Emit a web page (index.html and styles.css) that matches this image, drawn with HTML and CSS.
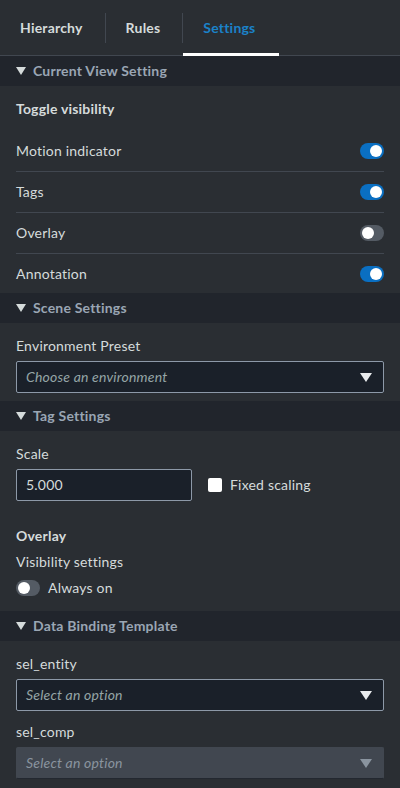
FILE: index.html
```
<!DOCTYPE html>
<html>
<head>
<meta charset="utf-8">
<link rel="stylesheet" href="styles.css">
</head>
<body>
<div class="panel">
  <div class="tabs">
    <div class="tab">Hierarchy</div>
    <div class="sep"></div>
    <div class="tab">Rules</div>
    <div class="sep"></div>
    <div class="tab active">Settings</div>
  </div>

  <div class="section-head"><span class="caret"></span>Current View Setting</div>
  <div class="section-body toggles">
    <div class="bold-label">Toggle visibility</div>
    <div class="rows">
      <div class="row"><span>Motion indicator</span><span class="toggle on"></span></div>
      <div class="row"><span>Tags</span><span class="toggle on"></span></div>
      <div class="row"><span>Overlay</span><span class="toggle"></span></div>
      <div class="row"><span>Annotation</span><span class="toggle on"></span></div>
    </div>
  </div>

  <div class="section-head"><span class="caret"></span>Scene Settings</div>
  <div class="section-body scene-body">
    <div class="field-label">Environment Preset</div>
    <div class="select"><span>Choose an environment</span><span class="arrow"></span></div>
  </div>

  <div class="section-head"><span class="caret"></span>Tag Settings</div>
  <div class="section-body tag-body">
    <div class="field-label">Scale</div>
    <div class="scale-row">
      <div class="input">5.000</div>
      <label class="check"><span class="box"></span>Fixed scaling</label>
    </div>
    <div class="bold-label overlay-title">Overlay</div>
    <div class="field-label">Visibility settings</div>
    <div class="inline-toggle"><span class="toggle"></span><span>Always on</span></div>
  </div>

  <div class="section-head"><span class="caret"></span>Data Binding Template</div>
  <div class="section-body">
    <div class="field-label">sel_entity</div>
    <div class="select"><span>Select an option</span><span class="arrow"></span></div>
    <div class="field-label second">sel_comp</div>
    <div class="select disabled"><span>Select an option</span><span class="arrow"></span></div>
  </div>
</div>
</body>
</html>
```
FILE: styles.css
```
* { box-sizing: border-box; }
html, body { margin: 0; padding: 0; }
body {
  background: #2a2e33;
  color: #d5dbdb;
  font-family: Lato, "Open Sans", sans-serif;
  font-size: 14px;
  line-height: 20px;
  letter-spacing: 0.2px;
  width: 400px;
  height: 788px;
  overflow: hidden;
}
.tabs {
  display: flex;
  align-items: center;
  height: 56px;
  border-bottom: 1px solid #414750;
}
.tab {
  height: 55px;
  display: flex;
  align-items: center;
  padding: 0 22px 0 20px;
  font-weight: 700;
  color: #d5dbdb;
  border-bottom: 3px solid transparent;
  padding-top: 3px;
  margin-bottom: -1px;
}
.tab.active {
  color: #1b82c9;
  border-bottom-color: #ffffff;
  padding-right: 24px;
}
.sep {
  width: 1px;
  height: 30px;
  background: #414750;
}
.section-head {
  height: 30px;
  background: #21252c;
  display: flex;
  align-items: center;
  padding-left: 16px;
  font-weight: 700;
  color: #9aa6b4;
}
.caret {
  width: 0;
  height: 0;
  border-left: 5px solid transparent;
  border-right: 5px solid transparent;
  border-top: 8px solid #d5dbdb;
  margin-right: 7px;
}
.section-body {
  padding: 13px 16px 9px;
}
.scene-body { padding-bottom: 8px; }
.toggles { padding-top: 13px; padding-bottom: 0; }
.bold-label { font-weight: 700; }
.rows { margin-top: 12px; }
.row {
  height: 41px;
  display: flex;
  align-items: center;
  justify-content: space-between;
  border-bottom: 1px solid #414750;
}
.row:last-child { border-bottom: none; height: 39px; }
.toggle {
  position: relative;
  width: 24px;
  height: 16px;
  border-radius: 8px;
  background: #545b64;
  flex: none;
}
.toggle::after {
  content: "";
  position: absolute;
  top: 2px;
  left: 2px;
  width: 12px;
  height: 12px;
  border-radius: 50%;
  background: #ffffff;
}
.toggle.on { background: #0a6fc2; }
.toggle.on::after { left: 10px; }
.field-label { margin-bottom: 5px; }
.field-label.second { margin-top: 11px; }
.select {
  height: 32px;
  background: #1a2029;
  border: 1px solid #8d99a8;
  border-radius: 2px;
  display: flex;
  align-items: center;
  justify-content: space-between;
  padding: 0 11px 0 9px;
  font-style: italic;
  color: #95a5a6;
}
.arrow {
  width: 0;
  height: 0;
  border-left: 6px solid transparent;
  border-right: 6px solid transparent;
  border-top: 9px solid #e9ebed;
}
.select.disabled {
  background: #414750;
  border-color: #414750;
  border-bottom-color: #232830;
  color: #8a949f;
}
.select.disabled .arrow { border-top-color: #8a949f; }
.tag-body { padding-top: 13px; padding-bottom: 13px; }
.scale-row {
  display: flex;
  align-items: center;
}
.input {
  width: 176px;
  height: 32px;
  background: #1a2029;
  border: 1px solid #8d99a8;
  border-radius: 2px;
  padding: 0 9px;
  display: flex;
  align-items: center;
}
.check {
  display: flex;
  align-items: center;
  margin-left: 16px;
}
.box {
  width: 14px;
  height: 14px;
  background: #ffffff;
  border-radius: 2px;
  margin-right: 8px;
}
.overlay-title { margin-top: 25px; margin-bottom: 6px; }
.inline-toggle {
  display: flex;
  align-items: center;
  gap: 8px;
  margin-top: 6px;
}
```
